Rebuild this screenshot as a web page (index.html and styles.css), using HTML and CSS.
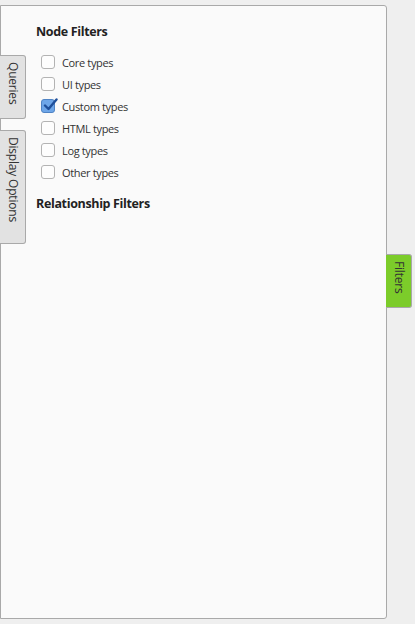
FILE: index.html
```html
<!DOCTYPE html>
<html>
<head>
<meta charset="utf-8">
<link rel="stylesheet" href="styles.css">
</head>
<body>
<div class="panel">
  <div class="content">
    <h2 class="heading">Node Filters</h2>
    <ul class="filters">
      <li class="filter"><span class="box"></span><span class="label">Core types</span></li>
      <li class="filter"><span class="box"></span><span class="label">UI types</span></li>
      <li class="filter"><span class="box checked"><svg class="tick" viewBox="0 0 16 16" width="16" height="16"><path d="M3 8.5 L6.5 12 L14.5 2.5" fill="none" stroke="#1f4f9a" stroke-width="2.4" stroke-linecap="round" stroke-linejoin="round"/></svg></span><span class="label">Custom types</span></li>
      <li class="filter"><span class="box"></span><span class="label">HTML types</span></li>
      <li class="filter"><span class="box"></span><span class="label">Log types</span></li>
      <li class="filter"><span class="box"></span><span class="label">Other types</span></li>
    </ul>
    <h2 class="heading rel">Relationship Filters</h2>
  </div>
  <div class="tab tab-queries"><span class="tab-text">Queries</span></div>
  <div class="tab tab-display"><span class="tab-text">Display Options</span></div>
  <div class="tab tab-filters"><span class="tab-text">Filters</span></div>
</div>
</body>
</html>
```

FILE: styles.css
```css
html, body {
  margin: 0;
  padding: 0;
}
body {
  background: #efefef;
  font-family: "Open Sans", "Noto Sans", sans-serif;
  color: #333;
  width: 415px;
  height: 624px;
  overflow: hidden;
}
.panel {
  position: relative;
  box-sizing: border-box;
  margin-top: 5px;
  width: 387px;
  height: 614px;
  background: #fafafa;
  border: 1px solid #a9a9a9;
  border-radius: 0 3px 3px 0;
}
.content {
  padding: 16px 0 0 35px;
}
.heading {
  margin: 0;
  font-size: 12.5px;
  font-weight: bold;
  letter-spacing: -0.35px;
  color: #222;
  line-height: 20px;
}
.filters {
  list-style: none;
  margin: 9px 0 0 0;
  padding: 0;
}
.filter {
  display: flex;
  align-items: center;
  height: 22px;
}
.box {
  position: relative;
  box-sizing: border-box;
  width: 14px;
  height: 14px;
  margin-left: 5px;
  margin-right: 7px;
  border: 1px solid #b3b3b3;
  border-radius: 3px;
  background: #fdfdfd;
}
.box.checked {
  background: #6ea6e8;
  border-color: #4f83c4;
}
.tick {
  position: absolute;
  left: 0px;
  top: -3px;
}
.label {
  font-size: 11px;
  letter-spacing: -0.35px;
  color: #333;
}
.rel {
  margin-top: 11px;
}
.tab {
  position: absolute;
  box-sizing: border-box;
  width: 26px;
  background: #e2e2e2;
  border: 1px solid #a9a9a9;
  border-left: none;
  border-radius: 0 3px 3px 0;
  display: flex;
  justify-content: center;
  padding-top: 6px;
}
.tab-text {
  writing-mode: vertical-rl;
  font-size: 12px;
  letter-spacing: -0.2px;
  color: #333;
  line-height: 22px;
}
.tab-queries {
  left: -1px;
  top: 49px;
  height: 64px;
}
.tab-display {
  left: -1px;
  top: 124px;
  height: 114px;
}
.tab-filters {
  left: 385px;
  top: 248px;
  height: 54px;
  background: #7ccc2a;
  padding-top: 6px;
}
```
